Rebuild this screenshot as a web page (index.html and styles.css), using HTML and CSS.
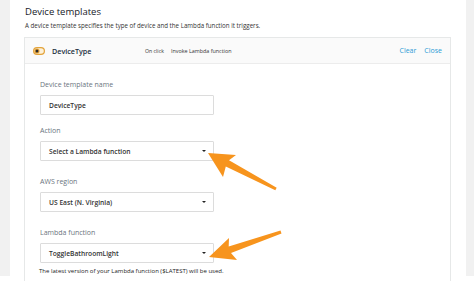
FILE: index.html
```html
<!DOCTYPE html>
<html>
<head>
<meta charset="utf-8">
<link rel="stylesheet" href="styles.css">
</head>
<body>
<div class="frame">
  <div class="strip strip-left"></div>
  <main class="main">
    <h1 class="title">Device templates</h1>
    <p class="subtitle">A device template specifies the type of device and the Lambda function it triggers.</p>
    <section class="card">
      <header class="card-head">
        <svg class="toggle" width="12" height="8" viewBox="0 0 12 8">
          <rect x="0.6" y="0.6" width="10.8" height="6.8" rx="3.4" fill="#fdf1d8" stroke="#e3a33b" stroke-width="1.2"/>
          <circle cx="4" cy="4" r="2.6" fill="#e8a53c"/>
          <circle cx="4" cy="4" r="1.5" fill="#2b2b2b"/>
        </svg>
        <span class="dev-name">DeviceType</span>
        <span class="meta">On click</span>
        <span class="meta meta-action">Invoke Lambda function</span>
        <span class="links"><a class="link">Clear</a><a class="link">Close</a></span>
      </header>
      <div class="card-body">
        <div class="field field-first">
          <label class="label">Device template name</label>
          <div class="box">DeviceType</div>
        </div>
        <div class="field">
          <label class="label">Action</label>
          <div class="box select">Select a Lambda function<span class="caret"></span></div>
        </div>
        <div class="field">
          <label class="label">AWS region</label>
          <div class="box select">US East (N. Virginia)<span class="caret"></span></div>
        </div>
        <div class="field">
          <label class="label">Lambda function</label>
          <div class="box select">ToggleBathroomLight<span class="caret"></span></div>
          <p class="help">The latest version of your Lambda function ($LATEST) will be used.</p>
        </div>
      </div>
    </section>
  </main>
  <div class="strip strip-right"></div>
</div>
<svg class="arrows" width="474" height="281" viewBox="0 0 474 281">
  <polygon fill="#f7941d" points="208,153 236,155 229,160.2 276.7,187.7 275.3,190.3 225.8,166.4 223,177"/>
  <polygon fill="#f7941d" points="209,257 229,238 228.7,246.5 280.5,230.6 281.5,233.4 231,253.1 237,260"/>
</svg>
</body>
</html>
```

FILE: styles.css
```css
* { box-sizing: border-box; }
html, body {
  margin: 0;
  padding: 0;
  background: #fff;
  overflow: hidden;
  width: 474px;
  height: 281px;
}
body {
  font-family: "Open Sans", "Noto Sans", sans-serif;
  color: #16191f;
  position: relative;
}
.frame {
  display: flex;
  height: 276px;
  align-items: stretch;
}
.strip {
  background: #f1f1f1;
  flex: none;
}
.strip-left { width: 10px; }
.strip-right { width: 8px; }
.main {
  flex: 1;
  padding: 5px 0 0 15px;
  min-width: 0;
}
.title {
  margin: 0;
  font-size: 9.5px;
  font-weight: 400;
  line-height: 14px;
  color: #16191f;
}
.subtitle {
  margin: 1px 0 0;
  font-size: 6.2px;
  line-height: 12px;
  color: #333;
}
.card {
  margin: 5px 0 0 -1px;
  width: 427px;
  height: 244px;
  border: 1px solid #e6e8e8;
  border-bottom: none;
}
.card-head {
  display: flex;
  align-items: center;
  height: 26px;
  background: #fafafa;
  border-bottom: 1px solid #ececec;
  padding: 0 8px 0 8px;
}
.toggle { flex: none; margin-right: 7px; }
.dev-name {
  font-size: 7.2px;
  font-weight: 600;
  color: #232f3e;
  width: 93px;
}
.meta {
  font-size: 5.2px;
  color: #333;
}
.meta-action { margin-left: 7px; font-size: 5.4px; }
.links {
  margin-left: auto;
  display: flex;
  gap: 8px;
}
.link {
  font-size: 7px;
  color: #2a9ad6;
}
.card-body {
  padding: 16px 0 0 15px;
}
.field {
  margin-bottom: 16px;
}
.field-first { margin-bottom: 11px; }
.label {
  display: block;
  font-size: 7px;
  line-height: 10px;
  color: #6b7580;
  margin-bottom: 5px;
}
.box {
  width: 174px;
  height: 20px;
  border: 1px solid #dcdcdc;
  border-radius: 1px;
  display: flex;
  align-items: center;
  padding-left: 8px;
  padding-right: 7px;
  font-size: 6.7px;
  font-weight: 600;
  color: #333;
}
.select { justify-content: space-between; }
.caret {
  width: 0;
  height: 0;
  border-left: 2px solid transparent;
  border-right: 2px solid transparent;
  border-top: 2.5px solid #222;
}
.help {
  margin: 4px 0 0 -1px;
  font-size: 6px;
  line-height: 9px;
  color: #222;
}
.arrows {
  position: absolute;
  left: 0;
  top: 0;
  pointer-events: none;
}
```
